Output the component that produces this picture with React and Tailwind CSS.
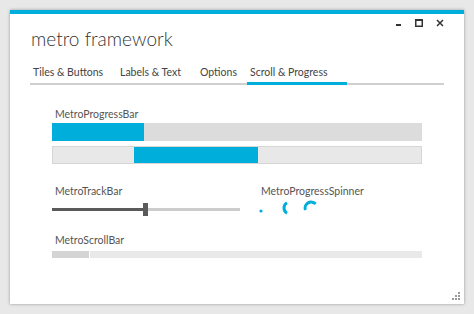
import React from 'react';

const tabs = [
    { label: 'Tiles & Buttons', w: 'w-[87px]' },
    { label: 'Labels & Text', w: 'w-[80px]' },
    { label: 'Options', w: 'w-[50px]' },
    { label: 'Scroll & Progress', w: 'w-[100px]', active: true },
];

function WindowControls() {
    return (
        <div className="flex items-start gap-[13px] pt-[5px] pr-[20px]">
            <svg width="6" height="8" viewBox="0 0 6 8"><rect x="0" y="5" width="5" height="2" fill="#333" /></svg>
            <svg width="8" height="8" viewBox="0 0 8 8"><rect x="0.75" y="0.75" width="6.5" height="6.5" fill="none" stroke="#333" strokeWidth="1.5" /><rect x="0" y="0" width="8" height="2" fill="#333" /></svg>
            <svg width="8" height="8" viewBox="0 0 8 8"><path d="M1 1 L7 7 M7 1 L1 7" stroke="#333" strokeWidth="1.5" /></svg>
        </div>
    );
}

function Spinner() {
    return (
        <svg width="70" height="18" viewBox="255 200 70 18" className="mt-[1px] -ml-[6px]">
            <circle cx="261" cy="212" r="1.6" fill="#00aedb" />
            <path d="M287 203.8 A6 6 0 0 0 287 214.2" fill="none" stroke="#00aedb" strokeWidth="3" />
            <path d="M305.4 211 A6 6 0 0 1 315.6 205.1" fill="none" stroke="#00aedb" strokeWidth="3" />
        </svg>
    );
}

export default function App() {
    return (
        <div className="w-[474px] h-[314px] bg-[#e8e8e8] p-[10px]" style={{ fontFamily: 'Lato, "Open Sans", sans-serif' }}>
            <div className="relative h-full bg-white border-t-[4px] border-[#00aedb] shadow-[0_0_3px_rgba(0,0,0,0.35)] flex flex-col">
                <div className="flex justify-between">
                    <h1 className="pl-[21px] pt-[13px] pb-[2px] text-[19px] leading-[24px] font-light text-[#333]">metro framework</h1>
                    <WindowControls />
                </div>

                <div className="ml-[20px] mr-[20px] mt-[12px] flex border-b-[2px] border-[#d0d0d0] text-[10.5px] text-[#444]">
                    {tabs.map(t => (
                        <div key={t.label} className={`${t.w} pl-[3px] pb-[1px] -mb-[2px] border-b-[3px] ${t.active ? 'border-[#00aedb]' : 'border-transparent'}`}>
                            {t.label}
                        </div>
                    ))}
                </div>

                <div className="ml-[42px] w-[370px] mt-[22px] text-[10.5px] text-[#555]">
                    <div className="pl-[3px] leading-[14px]">MetroProgressBar</div>
                    <div className="mt-[2px] h-[18px] bg-[#dcdcdc]">
                        <div className="h-full w-[92px] bg-[#00aedb]" />
                    </div>
                    <div className="mt-[5px] h-[18px] bg-[#e8e8e8] border border-[#d6d6d6] flex">
                        <div className="ml-[81px] w-[124px] h-full bg-[#00aedb]" />
                    </div>

                    <div className="mt-[20px] flex">
                        <div className="w-[209px]">
                            <div className="pl-[3px] leading-[14px]">MetroTrackBar</div>
                            <div className="mt-[5px] flex items-center h-[13px] w-[188px]">
                                <div className="w-[91px] h-[3px] bg-[#5a5a5a]" />
                                <div className="w-[5px] h-[13px] bg-[#5a5a5a]" />
                                <div className="flex-1 h-[3px] bg-[#cccccc]" />
                            </div>
                        </div>
                        <div>
                            <div className="leading-[14px]">MetroProgressSpinner</div>
                            <Spinner />
                        </div>
                    </div>

                    <div className="mt-[16px] pl-[3px] leading-[14px]">MetroScrollBar</div>
                    <div className="mt-[4px] h-[7px] flex gap-[1px] bg-white">
                        <div className="w-[37px] bg-[#d4d4d4]" />
                        <div className="flex-1 bg-[#e9e9e9]" />
                    </div>
                </div>

                <svg width="10" height="10" viewBox="0 0 10 10" className="absolute right-[3px] bottom-[3px]">
                    {[[7, 1], [4, 4], [7, 4], [1, 7], [4, 7], [7, 7]].map(([x, y]) => (
                        <rect key={`${x}-${y}`} x={x} y={y} width="2" height="2" fill="#9a9a9a" />
                    ))}
                </svg>
            </div>
        </div>
    );
}
